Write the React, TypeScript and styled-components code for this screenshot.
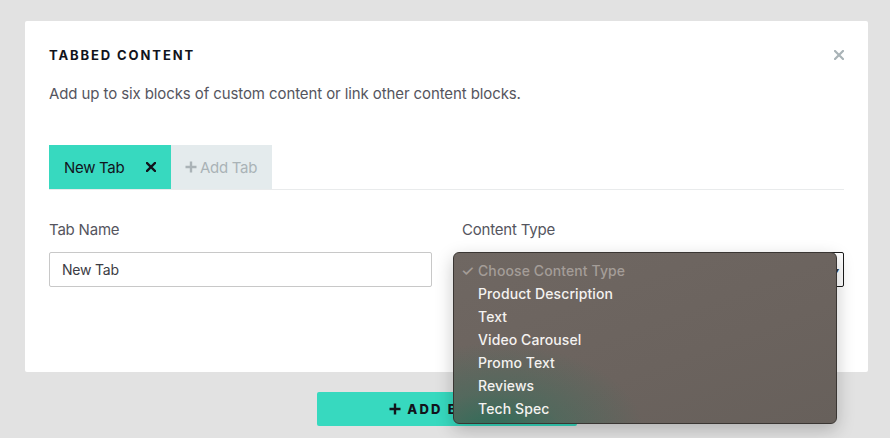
import { useState } from "react";
import styled, { createGlobalStyle } from "styled-components";

const GlobalStyle = createGlobalStyle`
    html, body {
        margin: 0;
        padding: 0;
        background: #e2e2e2;
    }
    body {
        font-family: Inter, "Noto Sans", sans-serif;
    }
`;

const Page = styled.div`
    width: 890px;
    height: 438px;
    padding: 21px 22px 0 25px;
    box-sizing: border-box;
    position: relative;
    overflow: hidden;
`;

const Modal = styled.div`
    background: #ffffff;
    width: 843px;
    height: 351px;
    box-sizing: border-box;
    padding: 25px 24px 0 24px;
    border-radius: 2px;
`;

const Header = styled.div`
    display: flex;
    justify-content: space-between;
    align-items: center;
    height: 18px;
`;

const Title = styled.h2`
    margin: 0;
    font-size: 13px;
    font-weight: 700;
    letter-spacing: 1.9px;
    color: #12141c;
`;

const CloseButton = styled.button`
    border: 0;
    background: none;
    padding: 0;
    margin-right: 0;
    display: flex;
    color: #a9b3b7;
    cursor: pointer;
`;

const Intro = styled.p`
    margin: 20px 0 0;
    font-size: 15px;
    color: #55555e;
    letter-spacing: -0.1px;
`;

const TabBar = styled.div`
    display: flex;
    margin-top: 42px;
    border-bottom: 1px solid #e9ebec;
`;

const Tab = styled.button<{ $active?: boolean }>`
    display: flex;
    align-items: center;
    box-sizing: border-box;
    white-space: nowrap;
    height: 44px;
    border: 0;
    padding-bottom: 1px;
    font-family: inherit;
    font-size: 15px;
    letter-spacing: -0.3px;
    cursor: pointer;
    background: ${(p) => (p.$active ? "#37d9bf" : "#e4ebed")};
    color: ${(p) => (p.$active ? "#12141c" : "#aab3b7")};
    padding-left: ${(p) => (p.$active ? "15px" : "14px")};
    padding-right: 14px;
    gap: ${(p) => (p.$active ? "22px" : "3px")};
    width: ${(p) => (p.$active ? "122px" : "101px")};
`;

const FormRow = styled.div`
    display: grid;
    grid-template-columns: 383px 382px;
    column-gap: 30px;
    margin-top: 30px;
`;

const Field = styled.div`
    display: flex;
    flex-direction: column;
    position: relative;
`;

const Label = styled.label`
    font-size: 15px;
    color: #55555e;
    letter-spacing: -0.2px;
    height: 19px;
    margin-bottom: 13px;
`;

const Input = styled.input`
    height: 35px;
    box-sizing: border-box;
    border: 1px solid #c8c8c8;
    border-radius: 2px;
    padding: 0 12px;
    font-family: inherit;
    font-size: 14px;
    color: #3c3c44;
    letter-spacing: -0.2px;
    outline: none;
`;

const SelectBox = styled.div`
    height: 35px;
    box-sizing: border-box;
    border: 1px solid #1b1b1b;
    border-radius: 2px;
    display: flex;
    justify-content: flex-end;
    align-items: center;
    padding-right: 4px;
    color: #333;
    font-size: 8px;
`;

const Footer = styled.div`
    display: flex;
    justify-content: center;
    margin-top: 20px;
    width: 843px;
`;

const AddBlock = styled.button`
    width: 260px;
    height: 34px;
    border: 0;
    border-radius: 2px;
    background: #37d9bf;
    color: #12141c;
    font-family: inherit;
    font-size: 13px;
    font-weight: 800;
    letter-spacing: 2.2px;
    display: flex;
    align-items: center;
    justify-content: center;
    gap: 6px;
`;

const Menu = styled.ul`
    position: absolute;
    left: 453px;
    top: 252px;
    width: 384px;
    height: 172px;
    box-sizing: border-box;
    margin: 0;
    padding: 6px 0 0;
    list-style: none;
    border: 1px solid #3a3633;
    border-radius: 6px;
    background:
        radial-gradient(ellipse 150px 90px at 40px 180px, rgba(40, 110, 88, 0.95), rgba(60, 110, 92, 0.5) 45%, rgba(109, 101, 95, 0) 100%),
        linear-gradient(160deg, #6f6762 0%, #6b635e 60%, #67605b 100%);
    box-shadow: 0 6px 18px rgba(0, 0, 0, 0.22);
    font-family: "Helvetica Neue", Inter, "Liberation Sans", sans-serif;
`;

const MenuItem = styled.li<{ $placeholder?: boolean }>`
    display: flex;
    align-items: center;
    height: 23px;
    padding-left: 7px;
    font-size: 14px;
    font-weight: 500;
    letter-spacing: 0.1px;
    color: ${(p) => (p.$placeholder ? "#a49d98" : "#f4f2f0")};
`;

const Check = styled.span`
    width: 17px;
    font-size: 15px;
    color: #a49d98;
`;

const options = ["Product Description", "Text", "Video Carousel", "Promo Text", "Reviews", "Tech Spec"];

function CrossIcon({ size, stroke }: { size: number; stroke: number }) {
    return (
        <svg width={size} height={size} viewBox="0 0 10 10">
            <path d="M1 1 L9 9 M9 1 L1 9" stroke="currentColor" strokeWidth={stroke} strokeLinecap="square" />
        </svg>
    );
}

function PlusIcon({ size, color }: { size: number; color: string }) {
    return (
        <svg width={size} height={size} viewBox="0 0 12 12">
            <path d="M6 0.5 V11.5 M0.5 6 H11.5" stroke={color} strokeWidth={2.4} />
        </svg>
    );
}

function App() {
    const [name, setName] = useState("New Tab");

    return (
        <Page>
            <GlobalStyle />
            <Modal>
                <Header>
                    <Title>TABBED CONTENT</Title>
                    <CloseButton>
                        <CrossIcon size={10} stroke={2.2} />
                    </CloseButton>
                </Header>
                <Intro>Add up to six blocks of custom content or link other content blocks.</Intro>
                <TabBar>
                    <Tab $active>
                        New Tab
                        <CrossIcon size={10} stroke={2.4} />
                    </Tab>
                    <Tab>
                        <PlusIcon size={12} color="#aab3b7" />
                        Add Tab
                    </Tab>
                </TabBar>
                <FormRow>
                    <Field>
                        <Label>Tab Name</Label>
                        <Input value={name} onChange={(e) => setName(e.target.value)} />
                    </Field>
                    <Field>
                        <Label>Content Type</Label>
                        <SelectBox>▾</SelectBox>
                    </Field>
                </FormRow>
            </Modal>
            <Footer>
                <AddBlock>
                    <PlusIcon size={12} color="#12141c" />
                    ADD BLOCK
                </AddBlock>
            </Footer>
            <Menu>
                <MenuItem $placeholder>
                    <Check>✓</Check>
                    Choose Content Type
                </MenuItem>
                {options.map((o) => (
                    <MenuItem key={o}>
                        <Check />
                        {o}
                    </MenuItem>
                ))}
            </Menu>
        </Page>
    );
}

export default App;
